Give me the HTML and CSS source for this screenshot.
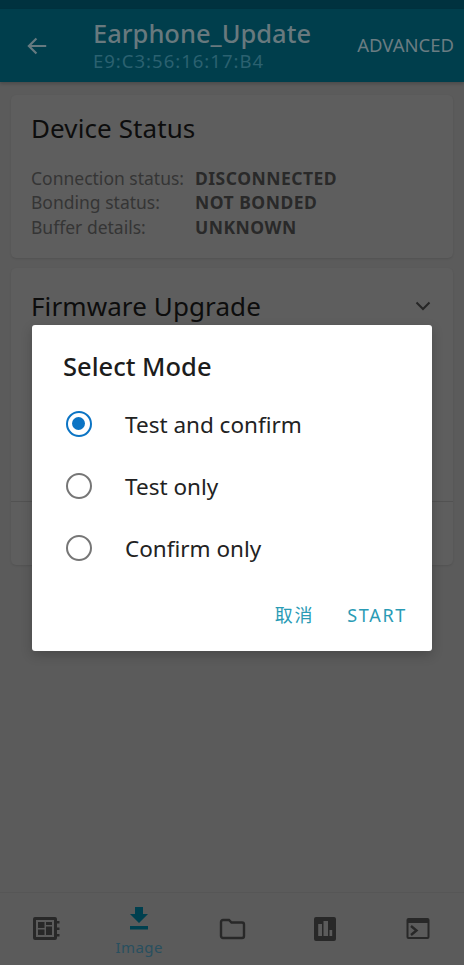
FILE: index.html
```html
<!DOCTYPE html>
<html lang="en">
<head>
<meta charset="utf-8">
<title>Earphone_Update</title>
<link rel="stylesheet" href="styles.css">
</head>
<body>
<div class="screen">
  <div class="statusbar"></div>
  <header class="appbar">
    <svg class="back" viewBox="0 0 24 24"><path d="M20.500 12H4.500M11.500 5l-7 7 7 7"/></svg>
    <div class="titles">
      <div class="title">Earphone_Update</div>
      <div class="subtitle">E9:C3:56:16:17:B4</div>
    </div>
    <div class="action">ADVANCED</div>
  </header>
  <main class="content">
    <section class="card status">
      <h2 class="card-title">Device Status</h2>
      <dl class="details">
        <dt>Connection status:</dt><dd>DISCONNECTED</dd>
        <dt>Bonding status:</dt><dd>NOT BONDED</dd>
        <dt>Buffer details:</dt><dd>UNKNOWN</dd>
      </dl>
    </section>
    <section class="card upgrade">
      <div class="upgrade-main">
        <div class="upgrade-head">
          <h2 class="card-title">Firmware Upgrade</h2>
          <svg class="chevron" viewBox="0 0 24 24"><path d="M5.500 8.500L12 15l6.500-6.500"/></svg>
        </div>
      </div>
      <div class="upgrade-foot"></div>
    </section>
  </main>
  <nav class="bottomnav">
    <div class="tab">
      <svg class="nav-icon" viewBox="0 0 28 28"><path class="fill" fill-rule="evenodd" d="M3 2h20a2 2 0 0 1 2 2v19a2 2 0 0 1-2 2H3a2 2 0 0 1-2-2V4a2 2 0 0 1 2-2zm1 3v17h18V5zm2 2h6.500v6H6zm8 0h6v3h-6zm0 4.500h6V20h-6zM6 14.500h6.500V20H6z"/><path class="fill" d="M25 6h2.500v2.500H25zM25 12.500h2.500V15H25zM25 19h2.500v2.500H25z"/></svg>
    </div>
    <div class="tab active">
      <svg class="nav-icon" viewBox="0 0 28 28"><path class="accent" d="M10 1h8v7h5l-9 9-9-9h5zM5 20h18v3.500H5z"/></svg>
      <span class="tab-label">Image</span>
    </div>
    <div class="tab">
      <svg class="nav-icon" viewBox="0 0 28 28"><path class="stroke" d="M3 7a2 2 0 0 1 2-2h6l2.500 2.500h10.500a2 2 0 0 1 2 2v11.500a2 2 0 0 1-2 2H5a2 2 0 0 1-2-2z"/></svg>
    </div>
    <div class="tab">
      <svg class="nav-icon" viewBox="0 0 28 28"><path class="fill" fill-rule="evenodd" d="M5 2h18a2 2 0 0 1 2 2v20a2 2 0 0 1-2 2H5a2 2 0 0 1-2-2V4a2 2 0 0 1 2-2zm2.200 7v12H11V9zm5.300-3v15H17V6zm6 9v6h2.700v-6z"/></svg>
    </div>
    <div class="tab">
      <svg class="nav-icon" viewBox="0 0 28 28"><path class="fill" fill-rule="evenodd" d="M4.500 3h19a2 2 0 0 1 2 2v17a2 2 0 0 1-2 2h-19a2 2 0 0 1-2-2V5a2 2 0 0 1 2-2zm0 5v14h19V8z"/><path class="stroke" d="M7 11l5.500 4.500L7 20"/></svg>
    </div>
  </nav>
  <div class="dialog" role="dialog">
    <h3 class="dialog-title">Select Mode</h3>
    <div class="options">
      <label class="option"><span class="radio checked"></span><span>Test and confirm</span></label>
      <label class="option"><span class="radio"></span><span>Test only</span></label>
      <label class="option"><span class="radio"></span><span>Confirm only</span></label>
    </div>
    <div class="buttons">
      <span class="btn">取消</span>
      <span class="btn">START</span>
    </div>
  </div>
</div>
</body>
</html>
```
FILE: styles.css
```css
* { box-sizing: border-box; }
html, body { margin: 0; padding: 0; }
body { font-family: "Noto Sans", "Noto Sans CJK SC", sans-serif; background: #5b5b5b; }
.screen { position: relative; width: 464px; height: 965px; overflow: hidden; display: flex; flex-direction: column; background: #5b5b5b; }
.statusbar { height: 9px; background: #00323f; flex: none; }
.appbar { height: 73px; flex: none; background: #003e4c; display: flex; align-items: center; padding-left: 24px; padding-right: 10px; box-shadow: 0 2px 3px rgba(0,0,0,.18); }
.back { width: 26px; height: 26px; margin-right: 43px; fill: none; stroke: #667a80; stroke-width: 2; }
.titles { flex: 1; min-width: 0; margin-top: -1px; }
.title { color: #68797e; font-size: 25.500px; line-height: 31px; font-weight: 500; }
.subtitle { color: #2b6170; font-size: 18.500px; line-height: 23px; font-weight: 400; letter-spacing: 1px; }
.action { color: #6a7c82; font-size: 18.500px; margin-top: -2px; }
.content { flex: 1; display: flex; flex-direction: column; gap: 10px; padding: 13px 11px 0; }
.card { background: #5e5e5e; border-radius: 5px; box-shadow: 0 1px 2px rgba(0,0,0,.1); padding: 0 20px; }
.status { height: 163px; padding-top: 16px; }
.card-title { margin: 0; color: #0d0d0d; font-size: 26px; line-height: 34px; font-weight: 400; letter-spacing: .1px; }
.details { margin: 21px 0 0; display: grid; grid-template-columns: 164px 1fr; grid-auto-rows: 24.400px; font-size: 17.500px; line-height: 24.400px; }
.details dt { color: #353535; }
.details dd { margin: 0; color: #292929; font-weight: 700; letter-spacing: .5px; }
.upgrade { height: 297px; padding: 0; display: flex; flex-direction: column; }
.upgrade-main { height: 234px; padding: 21px 20px 0; border-bottom: 1px solid #525252; }
.upgrade-foot { flex: 1; }
.upgrade-head { display: flex; align-items: center; justify-content: space-between; }
.chevron { width: 24px; height: 24px; margin-right: -2px; fill: none; stroke: #262626; stroke-width: 2; }
.bottomnav { position: relative; height: 73px; flex: none; display: grid; grid-template-columns: repeat(5, 1fr); align-items: start; border-top: 1px solid #565656; }
.tab { display: flex; flex-direction: column; align-items: center; padding-top: 22px; }
.tab.active { padding-top: 13px; }
.nav-icon { width: 28px; height: 28px; display: block; }
.fill { fill: #282828; }
.accent { fill: #00404f; }
.stroke { fill: none; stroke: #282828; stroke-width: 2.400; }
.tab-label { color: #284f5f; font-size: 15px; line-height: 20px; margin-top: 3px; letter-spacing: .4px; }
.dialog { position: absolute; left: 32px; top: 325px; width: 400px; height: 326px; background: #fff; border-radius: 3px; padding: 22px 25px 0 31px; box-shadow: 0 4px 12px rgba(0,0,0,.2); }
.dialog-title { margin: 0; color: #1c1c1c; font-size: 25.500px; line-height: 38px; font-weight: 500; }
.options { margin-top: 8px; display: flex; flex-direction: column; }
.option { height: 62px; display: flex; align-items: center; gap: 33px; color: #222; font-size: 22.500px; padding-left: 3px; }
.radio { width: 26px; height: 26px; border-radius: 50%; border: 2.500px solid #767676; flex: none; position: relative; }
.radio.checked { border-color: #0b74c4; }
.radio.checked::after { content: ""; position: absolute; left: 4px; top: 4px; width: 13px; height: 13px; border-radius: 50%; background: #0b74c4; }
.buttons { display: flex; justify-content: flex-end; gap: 33px; margin-top: 23px; color: #2a9bb5; font-size: 18px; letter-spacing: 1.700px; line-height: 26px; }
```
